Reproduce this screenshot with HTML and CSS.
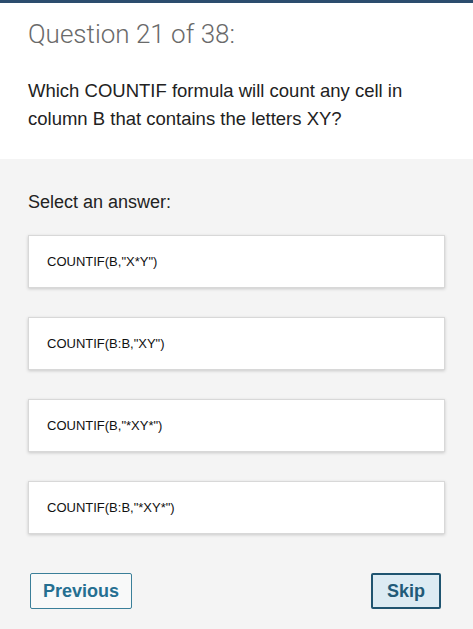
FILE: index.html
```html
<!DOCTYPE html>
<html lang="en">
<head>
  <meta charset="UTF-8">
  <meta name="viewport" content="width=device-width, initial-scale=1.0">
  <title>Question 21 of 38</title>
  <link rel="stylesheet" href="styles.css">
</head>
<body>
  <div class="top-bar"></div>

  <div class="question-section">
    <h1 class="question-title">Question 21 of 38:</h1>
    <p class="question-text">Which COUNTIF formula will count any cell in column B that contains the letters XY?</p>
  </div>

  <div class="answer-section">
    <h2 class="answer-label">Select an answer:</h2>
    <div class="answer-list">
      <div class="answer-card">COUNTIF(B,"X*Y")</div>
      <div class="answer-card">COUNTIF(B:B,"XY")</div>
      <div class="answer-card">COUNTIF(B,"*XY*")</div>
      <div class="answer-card">COUNTIF(B:B,"*XY*")</div>
    </div>
    <div class="nav-buttons">
      <button class="nav-button">Previous</button>
      <button class="nav-button skip">Skip</button>
    </div>
  </div>
</body>
</html>
```

FILE: styles.css
```css
body {
  font-family: 'Liberation Sans', Arial, sans-serif;
  margin: 0;
  padding: 0;
  background-color: #f4f4f4;
  color: #222;
}

.top-bar {
  height: 3px;
  background-color: #2c4d6e;
}

/* Enunciado */
.question-section {
  background-color: #fff;
  padding: 15px 28px 26px 28px;
}

.question-title {
  font-family: 'Roboto', sans-serif;
  font-weight: 300;
  font-size: 26px;
  line-height: 32px;
  color: #6a6a6a;
  margin: 0 0 27px 0;
}

.question-text {
  font-size: 18.5px;
  line-height: 28px;
  margin: 0;
  color: #222;
}

/* Respostas */
.answer-section {
  padding: 33px 28px 19px 28px;
}

.answer-label {
  font-size: 18px;
  font-weight: normal;
  margin: 0 0 22px 0;
  color: #222;
}

.answer-list {
  display: flex;
  flex-direction: column;
  gap: 29px;
}

.answer-card {
  background-color: #fff;
  border: 1px solid #d8d8d8;
  box-shadow: 0px 1px 3px rgba(0, 0, 0, 0.18);
  height: 51px;
  display: flex;
  align-items: center;
  padding-left: 18px;
  font-size: 13px;
  color: #111;
}

.nav-buttons {
  display: flex;
  justify-content: space-between;
  margin-top: 39px;
  padding: 0 4px 0 2px;
}

.nav-button {
  font-family: 'Liberation Sans', Arial, sans-serif;
  font-size: 18px;
  font-weight: bold;
  color: #256f91;
  background-color: #f8f9f9;
  border: 1px solid #3a7f99;
  border-radius: 2px;
  height: 36px;
  padding: 0 12px;
}

.nav-button.skip {
  color: #215a78;
  background-color: #dcebf3;
  border: 2px solid #1f5470;
  padding: 0 14px;
}
```
